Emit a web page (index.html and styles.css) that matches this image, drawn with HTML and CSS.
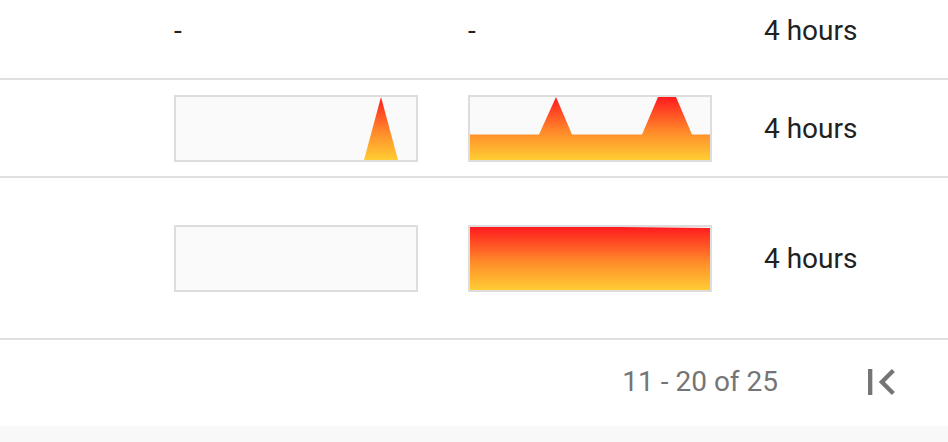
FILE: index.html
```html
<!DOCTYPE html>
<html lang="en">
<head>
    <meta charset="UTF-8">
    <title>Jobs</title>
    <link rel="stylesheet" href="styles.css">
</head>
<body>
    <svg class="defs" width="0" height="0">
        <defs>
            <linearGradient id="heat" gradientUnits="userSpaceOnUse" x1="0" y1="0" x2="0" y2="64">
                <stop offset="0" stop-color="#ff1a1f"/>
                <stop offset="0.55" stop-color="#ff8a2a"/>
                <stop offset="1" stop-color="#ffcd33"/>
            </linearGradient>
        </defs>
    </svg>
    <div class="card">
        <div class="row">
            <div></div>
            <div class="dash">-</div>
            <div class="dash">-</div>
            <div class="age">4 hours</div>
        </div>
        <div class="row">
            <div></div>
            <div class="spark">
                <svg viewBox="0 0 240 64" preserveAspectRatio="none">
                    <polygon points="188,64 205,0 222,64" fill="url(#heat)"/>
                </svg>
            </div>
            <div class="spark">
                <svg viewBox="0 0 240 64" preserveAspectRatio="none">
                    <polygon points="0,64 0,38 69,38 86,0 102,38 172,38 188,0 206,0 222,38 240,38 240,64" fill="url(#heat)"/>
                </svg>
            </div>
            <div class="age">4 hours</div>
        </div>
        <div class="row tall">
            <div></div>
            <div class="spark"></div>
            <div class="spark">
                <svg viewBox="0 0 240 64" preserveAspectRatio="none">
                    <polygon points="0,64 0,0 150,0 240,1 240,64" fill="url(#heat)"/>
                </svg>
            </div>
            <div class="age">4 hours</div>
        </div>
        <div class="pager">
            <span class="range">11 - 20 of 25</span>
            <svg class="first" viewBox="0 0 24 24">
                <path d="M18.41 16.59L13.82 12l4.59-4.59L17 6l-6 6 6 6zM6 6h2v12H6z"/>
            </svg>
        </div>
    </div>
</body>
</html>
```

FILE: styles.css
```css
body {
    margin: 0;
    background-color: #f8f8f8;
    font-family: Roboto, "Noto Sans", sans-serif;
    overflow: hidden;
}
.defs {
    position: absolute;
}
.card {
    margin-top: -17px;
    background-color: white;
    box-shadow: 0 2px 2px rgba(0, 0, 0, 0.3);
}
.row {
    display: grid;
    grid-template-columns: 174px 294px 296px 1fr;
    align-items: center;
    height: 96px;
    border-bottom: 2px solid #e0e0e0;
}
.row:first-child {
    height: 95px;
}
.row.tall {
    height: 160px;
}
.dash {
    font-size: 28px;
    color: #212121;
    line-height: 1;
}
.age {
    font-size: 28px;
    color: #212121;
}
.spark {
    width: 240px;
    height: 63px;
    border: 2px solid #dddddd;
    background-color: #fafafa;
}
.spark svg {
    display: block;
    width: 240px;
    height: 63px;
}
.pager {
    display: flex;
    align-items: center;
    justify-content: flex-end;
    height: 86px;
    padding-right: 41px;
}
.range {
    font-size: 28px;
    color: #757575;
    margin-right: 77px;
    margin-bottom: 3px;
}
.first {
    width: 52px;
    height: 52px;
    fill: #757575;
    margin-bottom: 2px;
}
```
